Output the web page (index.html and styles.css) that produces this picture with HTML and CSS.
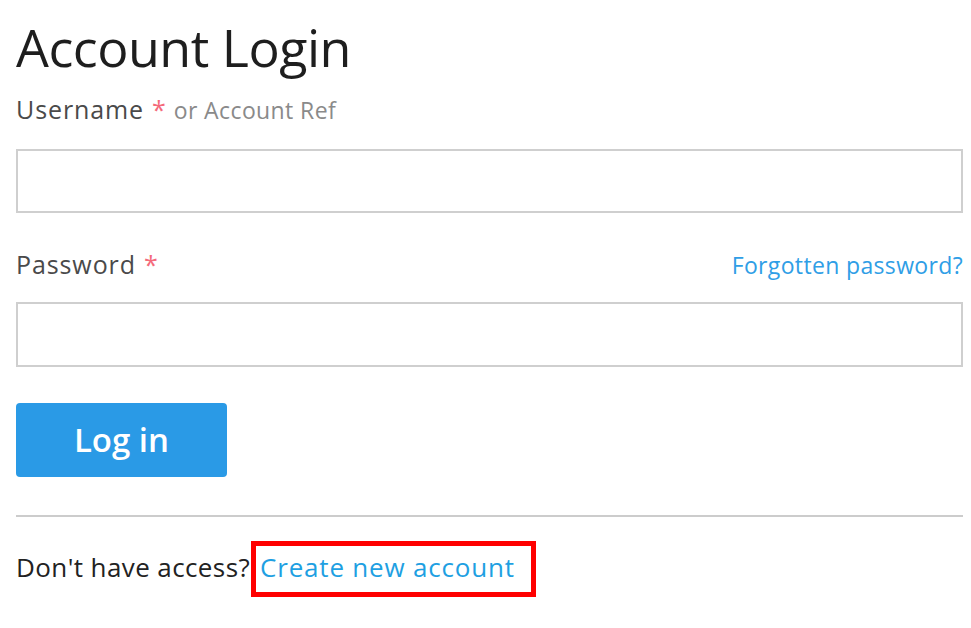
FILE: index.html
```html
<!DOCTYPE html>
<html lang="en">
<head>
<meta charset="utf-8">
<title>Account Login</title>
<link rel="stylesheet" href="styles.css">
</head>
<body>
<div class="login">
  <h1 class="title">Account Login</h1>
  <div class="field">
    <div class="label-row">
      <label class="label" for="user">Username<span class="req">*</span></label><span class="hint">or Account Ref</span>
    </div>
    <input class="input" id="user" type="text">
  </div>
  <div class="field field-pass">
    <div class="label-row label-row-split">
      <label class="label" for="pass">Password<span class="req">*</span></label>
      <a class="forgot" href="#">Forgotten password?</a>
    </div>
    <input class="input" id="pass" type="password">
  </div>
  <button class="btn" type="button">Log in</button>
  <hr class="divider">
  <div class="footer">
    <span class="footer-text">Don't have access?</span><span class="highlight"><a class="create" href="#">Create new account</a></span>
  </div>
</div>
</body>
</html>
```
FILE: styles.css
```css
html, body {
  margin: 0;
  padding: 0;
  background: #ffffff;
}
body {
  font-family: "Open Sans", "Noto Sans", sans-serif;
  color: #222;
}
.login {
  width: 947px;
  padding: 17px 0 0 16px;
}
.title {
  margin: 0;
  font-size: 52px;
  line-height: 60px;
  font-weight: 400;
  color: #1e1e1e;
  letter-spacing: -0.5px;
}
.field {
  margin-top: 17px;
}
.field-pass {
  margin-top: 36px;
}
.label-row {
  display: flex;
  align-items: baseline;
  height: 30px;
  line-height: 30px;
}
.label-row-split {
  justify-content: space-between;
}
.label {
  font-size: 25px;
  color: #4a4a4a;
  letter-spacing: 0.9px;
}
.req {
  color: #f46a7a;
  margin-left: 8px;
}
.hint {
  font-size: 23px;
  color: #8a8a8a;
  margin-left: 7px;
  letter-spacing: 0.4px;
}
.forgot {
  font-size: 23px;
  color: #2f9ee6;
  text-decoration: none;
  letter-spacing: 0.35px;
}
.input {
  display: block;
  box-sizing: border-box;
  width: 947px;
  height: 64px;
  margin: 25px 0 0;
  border: 2px solid #cfcfcf;
  background: #fff;
  padding: 0 12px;
  font: inherit;
}
.field-pass .input {
  margin-top: 23px;
  height: 65px;
}
.btn {
  display: block;
  margin-top: 36px;
  width: 211px;
  height: 74px;
  border: 0;
  border-radius: 4px;
  background: #2a9ae6;
  color: #fff;
  font-family: "Open Sans", "Noto Sans", sans-serif;
  font-size: 33px;
  font-weight: 600;
  padding: 0;
  line-height: 74px;
}
.divider {
  margin: 38px 0 0;
  border: 0;
  height: 2px;
  background: #cccccc;
}
.footer {
  display: flex;
  align-items: baseline;
  margin-top: 24px;
  font-size: 26px;
  line-height: 32px;
}
.footer-text {
  color: #222;
  letter-spacing: 0.4px;
}
.highlight {
  display: inline-block;
  margin-left: 1px;
  border: 5px solid #ff0000;
  padding: 5px 16px 9px 4px;
}
.create {
  color: #1ea0e2;
  text-decoration: none;
  letter-spacing: 0.8px;
}
```
